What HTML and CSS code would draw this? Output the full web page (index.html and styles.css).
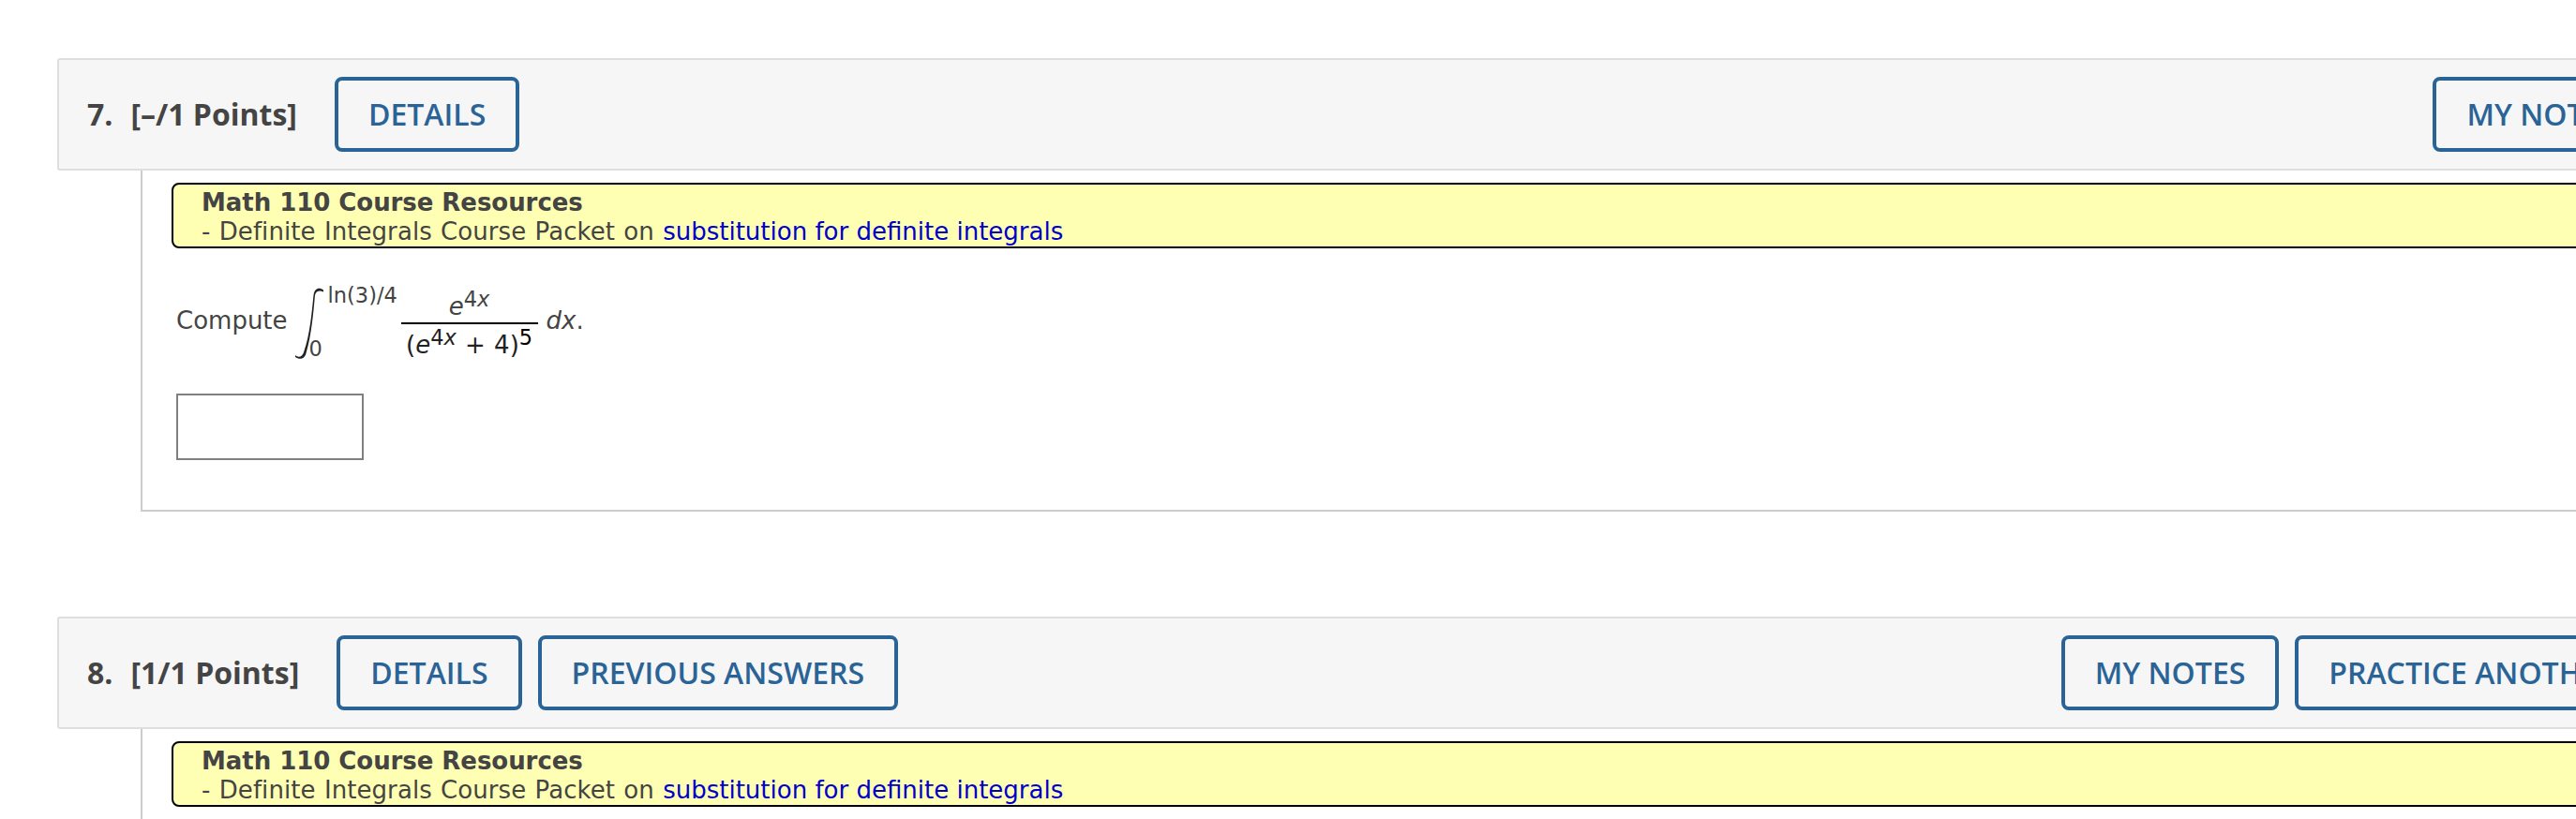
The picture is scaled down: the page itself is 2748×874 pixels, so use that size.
FILE: index.html
```html
<!DOCTYPE html>
<html lang="en">
<head>
  <meta charset="UTF-8">
  <title>Assignment Questions</title>
  <link rel="stylesheet" href="styles.css">
</head>
<body>
  <div class="page">

    <!-- Question 7 -->
    <section class="question">
      <div class="question-head">
        <span class="question-no">7.</span>
        <span class="question-points">[&ndash;/1 Points]</span>
        <button class="btn">DETAILS</button>
        <div class="head-right">
          <button class="btn">MY NOTES</button>
        </div>
      </div>
      <div class="question-body">
        <div class="resources">
          <strong>Math 110 Course Resources</strong><br>
          - Definite Integrals Course Packet on <a href="#">substitution for definite integrals</a>
        </div>
        <div class="problem">
          <span class="word">Compute</span>
          <span class="integral">
            <svg class="integral-sign" width="30" height="76" viewBox="0 0 30 76">
              <path d="M30 2.5 C26 -0.5 20.5 0 19.5 8 C18 22 16 50 9 69 C7.5 74 3 75 0 72 L0 74 C4 77 10 76.5 11.5 70 C17.5 50 19.5 24 21 8 C22 3.5 26 2.5 30 4.5 Z" fill="#222"/>
            </svg>
            <span class="limit-top">ln(3)/4</span>
            <span class="limit-bottom">0</span>
          </span>
          <span class="fraction">
            <span class="numer"><i>e</i><sup>4<i>x</i></sup></span>
            <span class="denom">(<i>e</i><sup>4<i>x</i></sup> + 4)<sup class="dark">5</sup></span>
          </span>
          <span class="word"><i>dx</i>.</span>
        </div>
        <input class="answer" type="text">
      </div>
    </section>

    <!-- Question 8 -->
    <section class="question">
      <div class="question-head">
        <span class="question-no">8.</span>
        <span class="question-points">[1/1 Points]</span>
        <button class="btn">DETAILS</button>
        <button class="btn">PREVIOUS ANSWERS</button>
        <div class="head-right">
          <button class="btn">MY NOTES</button>
          <button class="btn">PRACTICE ANOTHER</button>
        </div>
      </div>
      <div class="question-body">
        <div class="resources">
          <strong>Math 110 Course Resources</strong><br>
          - Definite Integrals Course Packet on <a href="#">substitution for definite integrals</a>
        </div>
      </div>
    </section>

  </div>
</body>
</html>
```

FILE: styles.css
```css
html, body {
  margin: 0;
  height: 100%;
  overflow: hidden;
  background: #fff;
}
.page {
  width: 2799px;
  padding: 62px 0 0 61px;
  color: #444;
}
.question {
  margin-bottom: 112px;
}
.question-head {
  display: flex;
  align-items: center;
  box-sizing: border-box;
  height: 120px;
  padding: 0 30px;
  background: #f6f6f6;
  border: 2px solid #dedede;
  border-radius: 3px;
  font-family: "Open Sans", sans-serif;
}
.question-no, .question-points {
  padding-bottom: 2px;
  font-size: 32px;
  font-weight: 700;
  color: #444;
}
.question-no {
  margin-right: 19px;
}
.question-points {
  margin-right: 40px;
}
.btn {
  box-sizing: border-box;
  height: 80px;
  padding: 0 32px 2px;
  margin-right: 17px;
  background: transparent;
  border: 4px solid #2a6496;
  border-radius: 8px;
  font-family: "Open Sans", sans-serif;
  font-size: 32px;
  font-weight: 600;
  color: #2a6496;
}
.head-right {
  display: flex;
  margin-left: auto;
}
.head-right .btn:last-child {
  margin-right: 0;
}
.question-body {
  box-sizing: border-box;
  height: 364px;
  margin-left: 89px;
  padding: 13px 0 0 31px;
  border-left: 2px solid #ccc;
  border-bottom: 2px solid #ccc;
  font-family: "DejaVu Sans", sans-serif;
}
.resources {
  box-sizing: border-box;
  height: 70px;
  padding: 4px 30px 0;
  background: #ffffb3;
  border: 2px solid #000;
  border-radius: 8px;
  font-size: 26px;
  line-height: 31px;
  letter-spacing: 0.08px;
  word-spacing: 0.9px;
  white-space: nowrap;
}
.resources strong {
  letter-spacing: -0.05px;
  word-spacing: 0;
}
.resources a {
  color: #0000cc;
  letter-spacing: 0;
  word-spacing: 0;
  text-decoration: none;
}
.problem {
  display: flex;
  align-items: flex-start;
  height: 90px;
  margin: 36px 0 0 5px;
  font-size: 26px;
}
.word {
  line-height: 83px;
  white-space: nowrap;
}
.integral {
  position: relative;
  display: block;
  width: 108px;
  height: 76px;
  margin: 6px 5px 0 8px;
}
.integral-sign {
  display: block;
}
.limit-top, .limit-bottom {
  position: absolute;
  font-size: 22.5px;
  line-height: 22px;
}
.limit-top {
  left: 35px;
  top: -3px;
}
.limit-bottom {
  left: 15px;
  top: 54px;
}
.fraction {
  display: flex;
  flex-direction: column;
  align-items: center;
  width: 146px;
  margin-right: 9px;
  white-space: nowrap;
}
.numer {
  padding-top: 10px;
  line-height: 33px;
}
.denom {
  width: 100%;
  border-top: 2px solid #000;
  text-align: center;
  line-height: 44px;
  word-spacing: 1px;
  color: #222;
}
.fraction sup {
  font-size: 22.5px;
  line-height: 0;
  vertical-align: 9px;
}
.fraction .dark {
  color: #000;
}
.answer {
  display: block;
  box-sizing: border-box;
  width: 200px;
  height: 71px;
  margin: 29px 0 0 5px;
  background: #fff;
  border: 2px solid #808080;
  border-radius: 0;
  outline: none;
}
```
